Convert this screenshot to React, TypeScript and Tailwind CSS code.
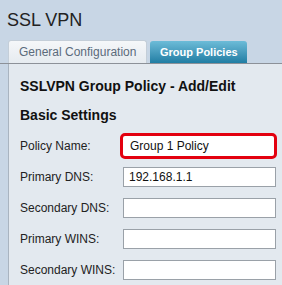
import React from "react";

// ── Field rows ─────────────────────────────────────────────────────
const FIELDS: { label: string; value: string; highlight?: boolean }[] = [
  { label: "Policy Name:", value: "Group 1 Policy", highlight: true },
  { label: "Primary DNS:", value: "192.168.1.1" },
  { label: "Secondary DNS:", value: "" },
  { label: "Primary WINS:", value: "" },
  { label: "Secondary WINS:", value: "" },
];

const FieldRow: React.FC<{ label: string; value: string; highlight?: boolean }> = ({
  label,
  value,
  highlight,
}) => (
  <div className="flex items-center h-[31px]">
    <span className="w-[103px] text-[12px] text-[#222]">{label}</span>
    {highlight ? (
      <div className="w-[157px] h-[26px] -ml-[3px] border-[3px] border-[#e3000f] rounded-[5px] bg-white flex items-center pl-[7px] text-[12px] text-[#111]">
        {value}
      </div>
    ) : (
      <div className="w-[153px] h-[20px] border border-[#9aa1a8] bg-white flex items-center pl-[5px] text-[12px] text-[#111]">
        {value}
      </div>
    )}
  </div>
);

export default function App() {
  return (
    <div
      className="w-[282px] h-[285px] overflow-hidden bg-[#c8d6e5] flex flex-col"
      style={{ fontFamily: '"Liberation Sans", Arial, sans-serif' }}
    >
      {/* Title */}
      <h1 className="text-[18px] leading-[22px] text-[#222] pl-[7px] pt-[9px]">SSL VPN</h1>

      {/* Tabs */}
      <div className="flex items-end mt-[10px] pl-[8px] h-[23px] border-b border-[#8c9198]">
        <div className="h-[23px] w-[139px] rounded-t-[3px] border border-b-0 border-[#c4ced8] bg-gradient-to-b from-[#f5f7f9] to-[#e6ebf0] flex items-center pl-[10px] text-[12px] text-[#5b6b7b]">
          General Configuration
        </div>
        <div className="ml-[3px] h-[22px] w-[97px] rounded-t-[3px] bg-gradient-to-b from-[#6cbcd8] to-[#1f7ea4] flex items-center pl-[10px] text-[11px] font-bold text-white">
          Group Policies
        </div>
      </div>

      {/* Panel */}
      <div className="flex-1 ml-[8px] border-l border-[#a9b4c0] bg-[#e3e9ef] pl-[11px] pt-[14px]">
        <h2 className="text-[14px] leading-[16px] font-bold text-[#111]">
          SSLVPN Group Policy - Add/Edit
        </h2>
        <h3 className="mt-[13px] text-[14px] leading-[16px] font-bold text-[#111]">
          Basic Settings
        </h3>
        <div className="mt-[7px] flex flex-col">
          {FIELDS.map((f) => (
            <FieldRow key={f.label} {...f} />
          ))}
        </div>
      </div>
    </div>
  );
}
